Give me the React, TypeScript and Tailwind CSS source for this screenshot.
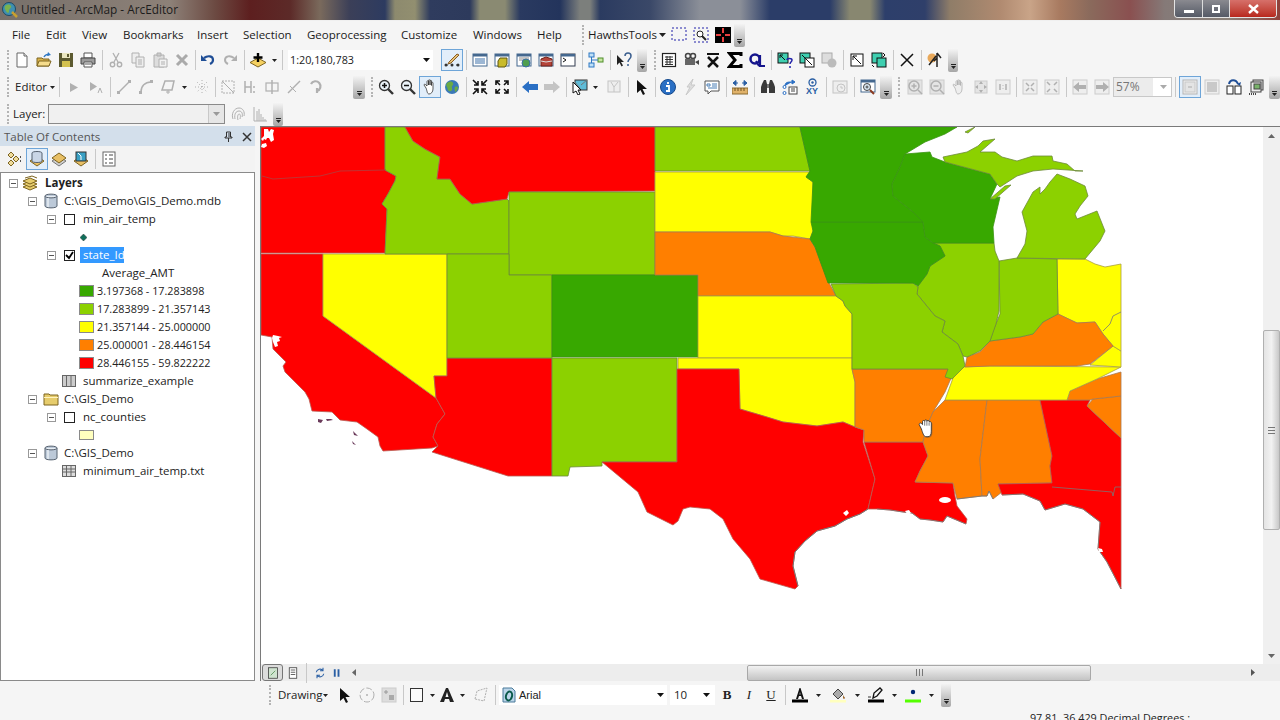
import React from "react";

const F = "[font-family:'Open_Sans','Noto_Sans',sans-serif]";

const S = ({ children, w = 16, h = 16, o = 1 }: { children: React.ReactNode; w?: number; h?: number; o?: number }) => (
  <svg width={w} height={h} viewBox={`0 0 ${w} ${h}`} opacity={o} className="block shrink-0">
    {children}
  </svg>
);
const G = "#b0b0b0";

const Icons: Record<string, React.ReactNode> = {
  new: <><path d="M3 1h7l3 3v11H3z" fill="#fff" stroke="#666" /><path d="M10 1v3h3" fill="#eee" stroke="#666" /></>,
  open: <><path d="M1 14V6h5l1 1h6v7z" fill="#d9b24a" stroke="#7d6420" /><path d="M1 14l2-5h12l-2 5z" fill="#f5dc8c" stroke="#7d6420" /><path d="M8 5c1-2 3-3 5-2" stroke="#2f78c4" strokeWidth="1.5" fill="none" /><path d="M12 0l3 3-4 1z" fill="#2f78c4" /></>,
  save: <><path d="M1 1h14v14H1z" fill="#5c5a30" /><rect x="4" y="1" width="8" height="5" fill="#eae6bf" /><rect x="9" y="2" width="2" height="3" fill="#5c5a30" /><rect x="4" y="9" width="8" height="6" fill="#d3c14f" /></>,
  print: <><path d="M4 1h8v5H4z" fill="#fff" stroke="#555" /><path d="M1 6h14v6H1z" fill="#9a9a9a" stroke="#444" /><path d="M4 10h8v5H4z" fill="#fff" stroke="#555" /><path d="M5 12h6" stroke="#555" /></>,
  cut: <><path d="M5 1l5 9M11 1L6 10" stroke={G} strokeWidth="1.3" fill="none" /><circle cx="4.500" cy="12.500" r="2.200" fill="none" stroke={G} strokeWidth="1.400" /><circle cx="11.500" cy="12.500" r="2.200" fill="none" stroke={G} strokeWidth="1.400" /></>,
  copy: <><path d="M2 1h7v10H2z" fill="#eee" stroke={G} /><path d="M6 5h8v10H6z" fill="#eee" stroke={G} /><path d="M8 8h4M8 10h4M8 12h4" stroke={G} /></>,
  paste: <><path d="M2 3h10v12H2z" fill="#ddd" stroke={G} /><path d="M5 1h4v3H5z" fill="#ccc" stroke={G} /><path d="M7 7h8v8H7z" fill="#f2f2f2" stroke={G} /><path d="M9 10h4M9 12h4" stroke={G} /></>,
  del: <path d="M3 3l10 10M13 3L3 13" stroke="#aaa" strokeWidth="3" />,
  undo: <><path d="M4 6c4-3 9-2 9 2 0 2-1 3-3 4" fill="none" stroke="#1f4e96" strokeWidth="2.200" /><path d="M1 3v6h6z" fill="#1f4e96" /></>,
  redo: <><path d="M12 6C8 3 3 4 3 8c0 2 1 3 3 4" fill="none" stroke={G} strokeWidth="2" /><path d="M15 3v6H9z" fill={G} /></>,
  add: <><path d="M8 6l8 4.500L8 15l-8-4.500z" fill="#f5d060" stroke="#7d6420" /><path d="M8 1v9M3.500 5.500h9" stroke="#000" strokeWidth="2.400" /></>,
  edit: <><path d="M2 13h12" stroke="#444" strokeDasharray="2 3" /><circle cx="2" cy="13" r="1.500" fill="#333" /><circle cx="8" cy="13" r="1.500" fill="#333" /><circle cx="14" cy="13" r="1.500" fill="#333" /><path d="M5 10l8-8 2 1-8 8-3 1z" fill="#e6c47a" stroke="#8a5a20" /></>,
  win: <><rect x="1" y="2" width="14" height="12" fill="#fff" stroke="#45688f" /><rect x="1" y="2" width="14" height="2.500" fill="#45688f" /><path d="M3 7h10M3 9h10M3 11h10" stroke="#3a6ea8" /></>,
  cat: <><rect x="1" y="2" width="14" height="12" fill="#fff" stroke="#45688f" /><rect x="1" y="2" width="14" height="2.500" fill="#45688f" /><path d="M6 6h7v6l-2 3H4v-6z" fill="#c9bb2a" stroke="#5e5710" /></>,
  search: <><rect x="1" y="2" width="14" height="12" fill="#fff" stroke="#45688f" /><rect x="1" y="2" width="14" height="2.500" fill="#45688f" /><path d="M3 6h10M3 8h6" stroke="#888" /><circle cx="10" cy="11" r="4" fill="#4f9e4f" stroke="#3b6fa8" /></>,
  tool: <><rect x="1" y="2" width="14" height="12" fill="#fff" stroke="#45688f" /><rect x="1" y="2" width="14" height="2.500" fill="#45688f" /><path d="M3 7l5-2 6 2v7H3z" fill="#b5443a" stroke="#6e2018" /><path d="M3 9l5 1 6-1" stroke="#ddd" fill="none" /></>,
  py: <><rect x="1" y="2" width="14" height="12" fill="#fff" stroke="#333c50" /><rect x="1" y="2" width="14" height="2.500" fill="#45688f" /><path d="M3 6l3 2-3 2" stroke="#111" fill="none" /></>,
  model: <><rect x="1" y="1" width="5" height="4" fill="#bfe0f7" stroke="#2f78c4" /><rect x="1" y="11" width="5" height="4" fill="#bfe0f7" stroke="#2f78c4" /><rect x="10" y="6" width="5" height="4" fill="#c6e6a0" stroke="#4f8e2a" /><path d="M3.500 5v6M3.500 8H10" stroke="#2f78c4" /></>,
  help: <><path d="M1 3v10l2.500-2.500 2 4 1.500-1-2-3.500H8z" fill="#222" /><path d="M9 4c0-4 6-4 6 0 0 3-3 3-3 6M12 12v2" fill="none" stroke="#3b5f8f" strokeWidth="1.500" /></>,
  table: <><rect x="1.500" y="1.500" width="13" height="13" fill="#fff" stroke="#222" strokeWidth="1.200" /><path d="M4 5h8M4 7.500h8M4 10h8M4 12.500h8M6 4v9M9 4v9" stroke="#333" /></>,
  film: <><circle cx="5" cy="4" r="2.500" fill="none" stroke="#444" strokeWidth="1.500" /><circle cx="10" cy="4" r="2.500" fill="none" stroke="#444" strokeWidth="1.500" /><rect x="2" y="7" width="10" height="6" fill="#666" /><path d="M12 10l4-2v5z" fill="#444" /></>,
  xbar: <><path d="M2 2h12" stroke="#111" strokeWidth="2" /><path d="M3 5l10 10M13 5L3 15" stroke="#111" strokeWidth="2.500" /></>,
  sigma: <path d="M14 4V1.500H2.500L8 8l-5.500 6.500H14V12" fill="none" stroke="#000" strokeWidth="3" />,
  ql: <><circle cx="6" cy="7" r="4.500" fill="none" stroke="#14148c" strokeWidth="2.500" /><path d="M7 9l3 5" stroke="#14148c" strokeWidth="2" /><path d="M11 3v11h5" fill="none" stroke="#14148c" strokeWidth="2.200" /></>,
  selq: <><rect x="1" y="1" width="10" height="10" fill="#3fcfb0" stroke="#111" /><path d="M3 3l5 5M3 3v3M3 3h3" stroke="#111" /><path d="M10 8c0-2 5-2 5 0 0 2-2 2-2 4M13 14v2" fill="none" stroke="#2222aa" strokeWidth="1.500" /></>,
  selb: <><rect x="1" y="1" width="10" height="10" fill="#3fcfb0" stroke="#111" /><rect x="6" y="6" width="9" height="9" fill="#fff" stroke="#111" /><path d="M3 3l5 5M8 8l5 5" stroke="#111" /></>,
  selg: <><rect x="1" y="1" width="10" height="10" fill="#ddd" stroke="#aaa" /><circle cx="11" cy="11" r="4.500" fill="#bbb" /></>,
  boxarrow: <><rect x="2" y="2" width="12" height="12" fill="#fff" stroke="#111" /><path d="M4 4l8 8M4 4v4M4 4h4" stroke="#111" fill="none" /></>,
  swap: <><rect x="1" y="1" width="10" height="10" fill="#3fcfb0" stroke="#111" /><rect x="6" y="6" width="9" height="9" fill="#3fcfb0" stroke="#111" /><path d="M12 1l2 2-2 2M1 13l2 2" stroke="#111" fill="none" /></>,
  cross: <path d="M2 2l12 12M14 2L2 14" stroke="#111" strokeWidth="1.500" />,
  tool2: <><circle cx="5" cy="6" r="4.500" fill="#e8a85a" /><path d="M2 13l7-9M10 15V1M10 1l4 5M7 9l3-3" stroke="#222" strokeWidth="1.500" fill="none" /></>,
  eArrow: <path d="M4 4l8 4.500-8 4.500z" fill={G} />,
  eArrowA: <><path d="M2 3l7 4.500-7 4.500z" fill={G} /><path d="M10 14l2-5 2 5" stroke={G} fill="none" /></>,
  eLine: <><path d="M3 13L13 3" stroke={G} strokeWidth="1.500" /><rect x="1" y="12" width="3" height="3" fill={G} /><rect x="12" y="1" width="3" height="3" fill={G} /></>,
  eCurve: <><path d="M3 13C3 7 7 3 13 3" stroke={G} strokeWidth="1.500" fill="none" /><rect x="1" y="12" width="3" height="3" fill={G} /><rect x="12" y="1" width="3" height="3" fill={G} /></>,
  ePoly: <><path d="M5 2h9l-2 9H2z" fill="none" stroke={G} strokeWidth="1.500" /><path d="M8 11v4M6 13h4" stroke={G} /></>,
  eDots: <path d="M8 1v14M1 8h14M3 3l10 10M13 3L3 13" stroke={G} strokeDasharray="1 2" />,
  eSq: <><path d="M2 2h12v12H2z" fill="none" stroke={G} strokeDasharray="2 1" /><path d="M2 2l12 12" stroke={G} /></>,
  eH: <path d="M3 2v12M9 2v12M3 8h6M12 7v2M12 12v2" stroke={G} strokeWidth="1.500" />,
  ePlus: <><rect x="2" y="4" width="12" height="8" fill="none" stroke={G} strokeWidth="1.200" /><path d="M8 1v14" stroke={G} strokeWidth="1.500" /></>,
  eSlash: <><path d="M2 14L14 2" stroke={G} strokeWidth="1.500" /><path d="M4 7l6 6" stroke={G} /></>,
  eQ: <path d="M3 5a5 5 0 1 1 6 7M9 9v5" stroke={G} strokeWidth="2.200" fill="none" />,
  zin: <><circle cx="6.500" cy="6.500" r="5" fill="#eaf2f8" stroke="#333" strokeWidth="1.300" /><path d="M4 6.500h5M6.500 4v5" stroke="#111" strokeWidth="1.500" /><path d="M10 10l5 5" stroke="#333" strokeWidth="2.400" /></>,
  zout: <><circle cx="6.500" cy="6.500" r="5" fill="#eaf2f8" stroke="#333" strokeWidth="1.300" /><path d="M4 6.500h5" stroke="#111" strokeWidth="1.500" /><path d="M10 10l5 5" stroke="#333" strokeWidth="2.400" /></>,
  pan: <path d="M4 9L2 6c0-1 1-1 2 0l1 1V2.500c0-1 1.500-1 1.500 0V6V1.500c0-1 1.500-1 1.500 0V6V2c0-1 1.500-1 1.500 0v4.500V4c0-1 1.500-1 1.500 0v6c0 3-2 5-4 5H7C5 15 5 11 4 9z" fill="#fff" stroke="#333" strokeWidth=".8" />,
  globe: <><circle cx="8" cy="8" r="7" fill="#3b79b8" /><path d="M3 4c3-2 5-2 6 0s-2 3-1 5-1 4-3 3-1-3-2-4-1-3 0-4zM11 8c2-1 3 0 3 1l-2 4c-1 0-2-3-1-5z" fill="#6bab45" /></>,
  zfi: <path d="M1 1l5 5M6 2v4H2M15 1l-5 5M10 2v4h4M1 15l5-5M6 14v-4H2M15 15l-5-5M10 14v-4h4" stroke="#111" strokeWidth="1.600" fill="none" />,
  zfo: <path d="M6 6L2 2M2 6V2h4M10 6l4-4M14 6V2h-4M6 10l-4 4M2 10v4h4M10 10l4 4M14 10v4h-4" stroke="#111" strokeWidth="1.600" fill="none" />,
  back: <path d="M0 8l7-6v3h9v6H7v3z" fill="#2a6fc4" />,
  fwd: <path d="M16 8L9 2v3H0v6h9v3z" fill="#c4c4c4" />,
  sel: <><rect x="3" y="1" width="12" height="10" fill="#5fbcd8" stroke="#333" /><path d="M3 3l6 8M15 1L9 6" stroke="#777" /><path d="M1 3v11l3-2 2 4 2-1-2-4h3z" fill="#fff" stroke="#111" /></>,
  selg2: <><rect x="2" y="2" width="12" height="11" fill="#eee" stroke="#c4c4c4" /><path d="M5 3l3 5v5M12 3L8 8" stroke="#c4c4c4" fill="none" /></>,
  arrow: <path d="M3 1v13l3.500-3 2.500 5 2-1-2.500-5H13z" fill="#111" />,
  info: <><circle cx="8" cy="8" r="7.500" fill="#2a6fc4" stroke="#174a8c" /><path d="M8 3v2M6 7h3v5h1M6 12h4" stroke="#fff" strokeWidth="1.800" fill="none" /></>,
  flash: <path d="M11 0L5 8h3l-4 8 9-10H9z" fill="#ddd" stroke="#c9c9c9" />,
  tip: <><path d="M1 2h14v10H7l-3 3v-3H1z" fill="#fff" stroke="#555" /><path d="M3 5h3v2H3zM8 5h5M8 7h5M4 9h9" stroke="#4a7fb5" fill="none" /></>,
  meas: <><path d="M1 4h5M10 4h5M1 4l3-2.500v5zM15 4l-3-2.500v5z" stroke="#2a5fa4" fill="#2a5fa4" /><rect x="0" y="9" width="16" height="6" fill="#e0b26a" stroke="#8a6a30" /><path d="M3 9v3M6 9v3M9 9v3M12 9v3" stroke="#6e5020" /></>,
  bino: <><path d="M2 5l2-4h2l1 4v9H1V8zM14 5l-2-4h-2L9 5v9h6V8z" fill="#3a3a3a" /><rect x="7" y="5" width="2" height="4" fill="#777" /></>,
  route: <><rect x="7" y="8" width="8" height="7" fill="#fff" stroke="#444" /><path d="M9 10h4M9 12h4" stroke="#444" /><circle cx="2.500" cy="8" r="1.500" fill="#fff" stroke="#2a6fc4" /><circle cx="2.500" cy="14" r="1.500" fill="#fff" stroke="#2a6fc4" /><path d="M3 7c0-4 3-4 7-4M10 1l3 2-3 2z" stroke="#2a6fc4" fill="#2a6fc4" /></>,
  time: <><rect x="1" y="2" width="14" height="12" fill="#eee" stroke="#c4c4c4" /><circle cx="9" cy="9" r="4" fill="none" stroke="#c4c4c4" /><path d="M9 7v2h2" stroke="#c4c4c4" fill="none" /></>,
  magWin: <><rect x="1" y="1" width="14" height="12" fill="#fff" stroke="#45688f" /><rect x="1" y="1" width="14" height="2.500" fill="#45688f" /><circle cx="7" cy="8" r="3.500" fill="#dbeaf5" stroke="#444" /><path d="M5.500 8h3M7 6.500v3" stroke="#444" /><path d="M10 11l4 4" stroke="#8a3a20" strokeWidth="2" /></>,
  lzi: <><rect x="1" y="1" width="14" height="14" fill="#e4e4e4" stroke="#ccc" /><circle cx="7" cy="7" r="5" fill="none" stroke={G} strokeWidth="1.500" /><path d="M4.500 7h5M7 4.500v5M11 11l4 4" stroke={G} strokeWidth="1.500" /></>,
  lzo: <><rect x="1" y="1" width="14" height="14" fill="#e4e4e4" stroke="#ccc" /><circle cx="7" cy="7" r="5" fill="none" stroke={G} strokeWidth="1.500" /><path d="M4.500 7h5M11 11l4 4" stroke={G} strokeWidth="1.500" /></>,
  lpan: <path d="M4 9L2 6c0-1 1-1 2 0l1 1V2.500c0-1 1.500-1 1.500 0V6V1.500c0-1 1.500-1 1.500 0V6V2c0-1 1.500-1 1.500 0v4.500V4c0-1 1.500-1 1.500 0v6c0 3-2 5-4 5H7C5 15 5 11 4 9z" fill="#eee" stroke={G} strokeWidth=".8" />,
  lfull: <><rect x="2" y="2" width="12" height="12" fill="#e4e4e4" stroke="#ccc" /><path d="M8 2l2 3H6zM8 14l-2-3h4zM2 8l3-2v4zM14 8l-3 2V6z" fill={G} /></>,
  l11: <><rect x="1" y="1" width="14" height="14" fill="#eee" stroke="#ccc" /><path d="M5 5v6M11 5v6M8 6v.5M8 9v.5" stroke={G} strokeWidth="1.500" /></>,
  lfi: <><rect x="1" y="1" width="14" height="14" fill="#eee" stroke="#ccc" /><path d="M4 4l3 3M12 4L9 7M4 12l3-3M12 12L9 9" stroke={G} strokeWidth="1.500" /></>,
  lfo: <><rect x="1" y="1" width="14" height="14" fill="#eee" stroke="#ccc" /><path d="M3 3l3 3M13 3l-3 3M3 13l3-3M13 13l-3-3" stroke={G} strokeWidth="1.500" /></>,
  lback: <><rect x="1" y="1" width="14" height="14" fill="#eee" stroke="#ccc" /><path d="M1 8l6-5v3h7v4H7v3z" fill={G} /></>,
  lfwd: <><rect x="1" y="1" width="14" height="14" fill="#eee" stroke="#ccc" /><path d="M15 8L9 3v3H2v4h7v3z" fill={G} /></>,
  page: <><rect x="1" y="1" width="14" height="14" fill="#f0f0f0" stroke="#b4b4b4" /><rect x="3" y="3" width="10" height="10" fill="#e4e4e4" stroke="#c8c8c8" /><path d="M6 8h4" stroke="#aaa" /></>,
  pagedots: <><rect x="1" y="1" width="14" height="14" fill="#eee" stroke="#ccc" /><rect x="3" y="3" width="10" height="10" fill="#c9c9c9" /></>,
  chg: <><rect x="1" y="7" width="6" height="8" fill="#fff" stroke="#222" /><rect x="9" y="7" width="6" height="8" fill="#fff" stroke="#222" /><path d="M3 5c1-5 7-5 9 0" stroke="#1f4e96" strokeWidth="2" fill="none" /><path d="M15 3l-1 4-3-2z" fill="#1f4e96" /></>,
  ddp: <><rect x="5" y="1" width="10" height="10" fill="#ddd" stroke="#444" /><rect x="3" y="3" width="10" height="10" fill="#eee" stroke="#444" /><rect x="6" y="5" width="6" height="5" fill="#79b36b" stroke="#444" /><path d="M1 15h8" stroke="#444" strokeWidth="2" strokeDasharray="1 1" /></>,
  zoomBox: <path d="M1 1h14v12H1z" fill="none" stroke="#2222aa" strokeDasharray="2 2" />,
  zoomSel: <><path d="M1 1h14v14H1z" fill="none" stroke="#2222aa" strokeDasharray="2 2" /><circle cx="7" cy="7" r="3" fill="#fff" stroke="#222" /><path d="M9 9l4 4" stroke="#222" strokeWidth="2" /></>,
  red: <><rect width="16" height="16" fill="#000" /><path d="M8 1v5M8 10v5M1 8h5M10 8h5" stroke="#e84040" strokeWidth="2" /></>,
  tocA: <><path d="M4 1l3 3-3 3-3-3zM9 5l3 3-3 3-3-3zM4 9l3 3-3 3-3-3z" fill="#f0dc9a" stroke="#7d6420" /><path d="M13 6h1M13 10h1" stroke="#222" strokeWidth="1.500" /></>,
  tocB: <><path d="M1 10l7 5 7-5-3-2H4z" fill="#e8bf64" stroke="#7d6420" /><path d="M3 2c0-2 10-2 10 0v8c0 2-10 2-10 0z" fill="#c9d6e6" stroke="#55606e" /></>,
  tocC: <><path d="M1 10l7 5 7-5-3-2H4z" fill="#d0d0d0" stroke="#777" /><path d="M1 7l7-5 7 5-7 5z" fill="#e8bf64" stroke="#7d6420" /></>,
  tocD: <><path d="M1 10l7 5 7-5-3-2H4z" fill="#e8bf64" stroke="#7d6420" /><rect x="3" y="1" width="10" height="9" fill="#3aa0c4" stroke="#333" /><path d="M5 2l3 3v4" stroke="#fff" fill="none" /></>,
  tocE: <><rect x="2" y="1" width="12" height="14" fill="#fff" stroke="#666" /><path d="M4 4h2M8 4h4M4 8h2M8 8h4M4 12h2M8 12h4" stroke="#444" /></>,
  layers: <><path d="M1 12l7 3 7-3-7-3z" fill="#e6cc6c" stroke="#7d6420" /><path d="M1 9l7 3 7-3-7-3z" fill="#e6cc6c" stroke="#7d6420" /><path d="M1 6l7 3 7-3-7-3z" fill="#e6cc6c" stroke="#7d6420" /><path d="M3 3l7-2 5 2" stroke="#7d6420" fill="none" /></>,
  db: <><path d="M2 3c0-2.500 12-2.500 12 0v10c0 2.500-12 2.500-12 0z" fill="#bcc9d8" stroke="#55606e" /><path d="M2 3c0 2.500 12 2.500 12 0" fill="#e8eef4" stroke="#55606e" /><path d="M5 5v9" stroke="#e8eef4" strokeWidth="1.500" /></>,
  folder: <><path d="M1 14V3h5l1 1h8v10z" fill="#e6cc6c" stroke="#7d6420" /><path d="M1 6h14v1H1z" fill="#fff3c0" /></>,
  tbl: <><rect x="1.500" y="2.500" width="13" height="11" fill="#ccc" stroke="#666" /><path d="M5.500 3v10M10 3v10" stroke="#666" /></>,
  tbl2: <><rect x="1.500" y="2.500" width="13" height="11" fill="#ddd" stroke="#666" /><path d="M2 6h12M2 9h12M5.500 3v10M10 3v10" stroke="#666" /></>,
  dataview: <><rect x="2" y="1" width="12" height="14" fill="#cfe3cf" stroke="#333" /><path d="M5 11l6-6" stroke="#4a8a4a" /></>,
  layout: <><rect x="3" y="1" width="10" height="14" fill="#fff" stroke="#333" /><path d="M5 4h6M5 7h6M5 10h6" stroke="#333" /></>,
  refresh: <path d="M3 7a5 5 0 0 1 9-2M13 9a5 5 0 0 1-9 2M12 1v4H8M4 15v-4h4" fill="none" stroke="#2a5fa4" strokeWidth="1.400" />,
  pause: <path d="M5 3v10M10 3v10" stroke="#2a5fa4" strokeWidth="2.500" />,
  rot: <><circle cx="8" cy="8" r="7" fill="none" stroke={G} strokeDasharray="6 2" /><circle cx="8" cy="8" r="1" fill={G} /></>,
  gplus: <><rect x="1" y="1" width="14" height="14" fill="#ddd" stroke="#ccc" /><path d="M5 3v4M3 5h4" stroke="#999" /><rect x="8" y="8" width="5" height="5" fill="#aaa" /></>,
  rect: <rect x="1.500" y="1.500" width="12" height="13" fill="#fafafa" stroke="#333" />,
  bigA: <path d="M1 15L7 1h2l6 14h-4l-1-3H6l-1 3zM6.500 10h3L8 5z" fill="#222" fillRule="evenodd" />,
  gpoly: <path d="M2 12l2-8 10-3-3 13z" fill="none" stroke={G} strokeDasharray="2 1" />,
  opent: <><path d="M2 1h9l3 3v11H2z" fill="#bcd6ea" stroke="#4a7a9a" /><ellipse cx="8" cy="9" rx="3" ry="4.500" fill="none" stroke="#0b5a4a" strokeWidth="2" transform="rotate(15 8 9)" /></>,
  fcolor: <><path d="M4 12L7.500 1h1L12 12H10l-1-3H7l-1 3zM7.500 7.500h1L8 5z" fill="#111" fillRule="evenodd" /><rect x="0" y="12.500" width="16" height="3" fill="#000" /></>,
  fill: <><path d="M3 7l5-5 5 5-5 5z" fill="#aaa" stroke="#444" /><path d="M13 8c1 2 2 2 2 3s-2 1-2 0z" fill="#a06a30" /><rect x="0" y="13" width="16" height="2.500" fill="#ffffbe" /></>,
  pen: <><path d="M5 11l1-5 6-5 2 2-5 6z" fill="none" stroke="#111" strokeWidth="1.300" /><path d="M0 10h3" stroke="#333" /><rect x="0" y="12.500" width="16" height="3" fill="#000" /></>,
  mark: <><circle cx="8" cy="5" r="2.200" fill="#002673" /><rect x="0" y="12.500" width="16" height="3" fill="#55ff00" /></>,
};

const Ic = ({ n, o }: { n: string; o?: number }) => <S o={o}>{Icons[n]}</S>;

const B = ({ n, active }: { n: string; active?: boolean }) => (
  <div className={`w-[22px] h-[22px] shrink-0 flex items-center justify-center ${active ? "bg-[#e2eefa] border border-[#6ea5d8]" : ""}`}>
    <Ic n={n} />
  </div>
);
const Sep = ({ w = "w-[6px]" }: { w?: string }) => (
  <div className={`${w} h-[20px] shrink-0 flex justify-center`}>
    <div className="w-px h-full bg-[#c8c8c8]" />
  </div>
);
const Tri = ({ c = "#222" }: { c?: string }) => (
  <svg width="7" height="4" viewBox="0 0 7 4" className="block shrink-0">
    <path d="M0 0h7L3.500 4z" fill={c} />
  </svg>
);
const Dd = ({ w = "w-[10px]" }: { w?: string }) => (
  <div className={`${w} h-[22px] shrink-0 flex items-center justify-center`}>
    <svg width="5" height="3" viewBox="0 0 5 3" className="block"><path d="M0 0h5L2.500 3z" fill="#222" /></svg>
  </div>
);
const Grip = () => (
  <div className="w-[6px] h-[20px] shrink-0 flex justify-center">
    <div className="h-full border-l-2 border-dotted border-[#b4b4b4]" />
  </div>
);
const Chev = ({ cls = "w-[10px]" }: { cls?: string }) => (
  <div className={`${cls} h-[24px] shrink-0 rounded-b-[2px] bg-gradient-to-b from-[#f7f7f7] to-[#a6a6a6] flex flex-col items-center justify-end pb-[3px] gap-[1px]`}>
    <div className="w-[5px] h-px bg-[#222]" />
    <svg width="5" height="3" viewBox="0 0 5 3" className="block"><path d="M0 0h5L2.500 3z" fill="#222" /></svg>
  </div>
);

const Title = () => (
  <div className={`h-[21px] shrink-0 flex items-start justify-between border-b border-[#f0f0f0] bg-[linear-gradient(90deg,#77706a_0,#8d8178_170px,#6c4a42_215px,#5d1f1f_250px,#5c2a28_290px,#7a6a5c_320px,#3b3f58_350px,#2d3b60_385px,#8d8a6e_395px,#928f70_415px,#2f3c5e_430px,#2d3a5c_470px,#8a8a72_480px,#8a8a72_505px,#2a3a60_520px,#23345c_560px,#7c7f7c_580px,#7c7f7c_590px,#2b3b60_600px,#3a4868_650px,#8b8f98_700px,#8b8f98_740px,#2b3d68_770px,#2b3d68_830px,#888770_850px,#888770_870px,#2d3f6b_885px,#2f3f6a_925px,#8f7d68_950px,#b08a70_1000px,#c9a488_1030px,#a87a60_1060px,#8a6a5c_1090px,#8a5050_1130px,#857a78_1165px,#8a8078_1230px,#90403a_1280px)] ${F}`}>
    <div className="flex items-center h-[20px] pl-[2px]">
      <S>
        <circle cx="7" cy="7" r="6.500" fill="#3f8fb0" stroke="#1d4a66" />
        <path d="M3 4c2-2 5-2 6 0s-2 2-2 5-2 2-3 0-2-3-1-5z" fill="#7ab24e" />
        <path d="M10 10l5 5" stroke="#c9a030" strokeWidth="2.500" />
      </S>
      <span className="ml-[3px] text-[11.800px] leading-none text-[#1c1c1c] whitespace-nowrap">Untitled - ArcMap - ArcEditor</span>
    </div>
    <div className="flex mr-[3px] h-[18px] border border-t-0 border-[#e4e4e4] rounded-b-[4px] overflow-hidden">
      <div className="w-[28px] bg-gradient-to-b from-[#8a8a90] to-[#555a66] flex items-center justify-center border-r border-[#ddd]">
        <div className="w-[10px] h-[3px] mt-[5px] bg-white" />
      </div>
      <div className="w-[27px] bg-gradient-to-b from-[#8a8a90] to-[#555a66] flex items-center justify-center border-r border-[#ddd]">
        <div className="w-[8px] h-[8px] border-2 border-white" />
      </div>
      <div className="w-[46px] bg-gradient-to-b from-[#d6706a] to-[#b8261c] flex items-center justify-center">
        <svg width="11" height="10" viewBox="0 0 11 10"><path d="M1 1l9 8M10 1L1 9" stroke="#fff" strokeWidth="2.400" /></svg>
      </div>
    </div>
  </div>
);

const MENU: [string, string][] = [
  ["File", "w-[34px]"], ["Edit", "w-[36px]"], ["View", "w-[41px]"], ["Bookmarks", "w-[74px]"], ["Insert", "w-[46px]"],
  ["Selection", "w-[64px]"], ["Geoprocessing", "w-[94px]"], ["Customize", "w-[72px]"], ["Windows", "w-[64px]"], ["Help", "w-[43px]"],
];

const Menu = () => (
  <div className={`h-[26px] shrink-0 flex items-center pl-[12px] pt-[2px] text-[11.500px] text-[#1a1a1a] ${F}`}>
    {MENU.map(([t, w]) => (
      <span key={t} className={`${w} shrink-0 whitespace-nowrap`}>{t}</span>
    ))}
    <Grip />
    <span className="ml-[2px] w-[71px] shrink-0 whitespace-nowrap">HawthsTools</span>
    <Tri c="#222" />
    <div className="ml-[2px] flex items-center">
      <B n="zoomBox" /><B n="zoomSel" /><B n="red" />
    </div>
    <Chev cls="w-[11px]" />
  </div>
);

const Row2 = () => (
  <div className="h-[26px] shrink-0 flex items-center pl-[5px]">
    <Grip />
    <B n="new" /><B n="open" /><B n="save" /><B n="print" />
    <Sep />
    <B n="cut" /><B n="copy" /><B n="paste" /><B n="del" />
    <Sep w="w-[4px]" />
    <B n="undo" /><B n="redo" />
    <Sep />
    <B n="add" /><Dd />
    <Sep />
    <div className={`ml-[3px] w-[145px] h-[20px] shrink-0 bg-white flex items-center justify-between pl-[2px] pr-[3px] text-[10.800px] text-[#222] ${F}`}>
      <span>1:20,180,783</span><Tri c="#111" />
    </div>
    <div className="ml-[8px]"><B n="edit" active /></div>
    <Sep />
    <B n="win" /><B n="cat" /><B n="search" /><B n="tool" /><B n="py" />
    <Sep />
    <B n="model" />
    <Sep />
    <B n="help" />
    <div className="ml-[2px]"><Chev /></div>
    <div className="ml-[5px]"><Grip /></div>
    <B n="table" /><B n="film" /><B n="xbar" /><B n="sigma" /><B n="ql" />
    <Sep />
    <B n="selq" /><B n="selb" /><B n="selg" />
    <Sep />
    <B n="boxarrow" /><B n="swap" />
    <Sep />
    <B n="cross" />
    <Sep />
    <B n="tool2" />
    <div className="ml-[2px]"><Chev /></div>
  </div>
);

const Row3 = () => (
  <div className="h-[26px] shrink-0 flex items-center pl-[5px] mt-[1px]">
    <Grip />
    <div className={`w-[45px] shrink-0 flex items-center pl-[4px] text-[11.500px] text-[#222] ${F}`}>
      <span>Editor</span>
      <div className="ml-[3px]"><svg width="5" height="3" viewBox="0 0 5 3" className="block"><path d="M0 0h5L2.500 3z" fill="#222" /></svg></div>
    </div>
    <Sep />
    <div className="w-px shrink-0" />
    <B n="eArrow" /><B n="eArrowA" />
    <Sep />
    <B n="eLine" /><B n="eCurve" /><B n="ePoly" /><Dd />
    <div className="ml-[2px]"><B n="eDots" /></div>
    <Sep w="w-[4px]" />
    <B n="eSq" /><B n="eH" /><B n="ePlus" /><B n="eSlash" /><B n="eQ" />
    <div className="ml-[26px]"><Chev cls="w-[12px]" /></div>
    <div className="ml-[4px]"><Grip /></div>
    <B n="zin" /><B n="zout" /><B n="pan" active /><B n="globe" />
    <Sep />
    <B n="zfi" /><B n="zfo" />
    <Sep />
    <B n="back" /><B n="fwd" />
    <Sep />
    <B n="sel" /><Dd w="w-[8px]" />
    <div className="ml-[4px]"><B n="selg2" /></div>
    <Sep />
    <B n="arrow" />
    <Sep w="w-[4px]" />
    <B n="info" /><B n="flash" /><B n="tip" />
    <Sep />
    <B n="meas" />
    <Sep />
    <B n="bino" /><B n="route" />
    <div className="w-[22px] h-[22px] shrink-0 flex flex-col items-center justify-center text-[#2a5fa4]">
      <svg width="9" height="9" viewBox="0 0 9 9" className="block"><circle cx="4.500" cy="4.500" r="3.500" fill="none" stroke="#2a5fa4" strokeWidth="1.300" /><circle cx="4.500" cy="4.500" r="1.200" fill="#2a5fa4" /></svg>
      <span className="text-[9px] leading-[9px] font-bold [font-family:'Liberation_Sans',sans-serif]">XY</span>
    </div>
    <Sep />
    <B n="time" />
    <Sep />
    <B n="magWin" />
    <div className="ml-[1px]"><Chev cls="w-[12px]" /></div>
    <div className="ml-[4px]"><Grip /></div>
    <div className="ml-[2px] flex">
      <B n="lzi" /><B n="lzo" /><B n="lpan" /><B n="lfull" /><B n="l11" />
    </div>
    <Sep w="w-[5px]" />
    <B n="lfi" /><B n="lfo" />
    <Sep />
    <B n="lback" /><B n="lfwd" />
    <div className={`w-[59px] h-[20px] shrink-0 bg-white border border-[#c8c8c8] flex items-center justify-between pr-[4px] text-[12px] ${F}`}>
      <span className="bg-[#ececec] w-[39px] h-full pl-[2px] leading-[18px] text-[#777]">57%</span>
      <Tri c="#aaa" />
    </div>
    <Sep w="w-[7px]" />
    <B n="page" active /><B n="pagedots" /><B n="chg" /><B n="ddp" />
    <div className="ml-[2px]"><Chev cls="w-[11px]" /></div>
  </div>
);

const Row4 = () => (
  <div className="h-[26px] shrink-0 flex items-center pl-[5px] pt-[2px]">
    <Grip />
    <span className={`ml-[2px] w-[35px] shrink-0 text-[11.500px] text-[#222] ${F}`}>Layer:</span>
    <div className="w-[177px] h-[20px] shrink-0 border border-[#8a8a8a] bg-[#f0f0f0] flex items-center justify-end">
      <div className="w-[16px] h-full bg-[#e6e6e6] border-l border-[#c8c8c8] flex items-center justify-center"><Tri c="#999" /></div>
    </div>
    <div className="ml-[2px] flex">
      <div className="w-[22px] h-[22px] flex items-center justify-center">
        <S><path d="M3 13C1 8 4 2 9 2c4 0 6 4 5 8M5 13C4 8 6 5 9 5c3 0 4 3 3 6M8 14c-1-3 0-6 1-6s2 1 1 5" fill="none" stroke={G} /></S>
      </div>
      <div className="w-[22px] h-[22px] flex items-center justify-center">
        <S><path d="M2 15V1M2 15h13M5 15V5M7 15V3M9 15V8M11 15v-4M13 15v-2" stroke={G} /></S>
      </div>
    </div>
    <div className="ml-[2px]"><Chev /></div>
  </div>
);

const Exp = () => (
  <div className="w-[9px] h-[9px] shrink-0 border border-[#999] bg-white flex items-center justify-center">
    <div className="w-[5px] h-px bg-[#555]" />
  </div>
);
const Chk = ({ on }: { on?: boolean }) => (
  <div className="w-[11px] h-[11px] shrink-0 border border-[#222] bg-white flex items-center justify-center">
    {on && <svg width="9" height="9" viewBox="0 0 9 9" className="block"><path d="M1 4l3 3 4-6" stroke="#000" strokeWidth="1.800" fill="none" /></svg>}
  </div>
);
const Txt = ({ children, cls = "" }: { children: React.ReactNode; cls?: string }) => (
  <span className={`whitespace-nowrap text-[11.500px] text-[#222] ${cls}`}>{children}</span>
);
const R = ({ cls, children }: { cls: string; children?: React.ReactNode }) => (
  <div className={`h-[18px] flex items-center ${cls}`}>{children}</div>
);
const Top = ({ n, t }: { n: string; t: string }) => (
  <R cls="pl-[27px]"><Exp /><div className="ml-[6px]"><Ic n={n} /></div><Txt cls="ml-[5px]">{t}</Txt></R>
);
const Lyr = ({ t, on, hl }: { t: string; on?: boolean; hl?: boolean }) => (
  <R cls="pl-[46px]"><Exp /><div className="ml-[8px]"><Chk on={on} /></div>
    {hl ? <span className="ml-[5px] w-[44px] pl-[3px] h-[16px] leading-[16px] whitespace-nowrap text-[11.500px] text-white bg-[#3399ff]">{t}</span> : <Txt cls="ml-[8px]">{t}</Txt>}
  </R>
);
const Tb = ({ n, t }: { n: string; t: string }) => (
  <R cls="pl-[60px]"><Ic n={n} /><Txt cls="ml-[6px]">{t}</Txt></R>
);
const LEG: [string, string][] = [
  ["bg-[#38a800]", "3.197368 - 17.283898"],
  ["bg-[#8cd100]", "17.283899 - 21.357143"],
  ["bg-[#ffff00]", "21.357144 - 25.000000"],
  ["bg-[#ff7f00]", "25.000001 - 28.446154"],
  ["bg-[#ff0000]", "28.446155 - 59.822222"],
];

const Toc = () => (
  <div className={`w-[255px] shrink-0 flex flex-col ${F}`}>
    <div className="h-[20px] shrink-0 bg-[#d3dfeb] flex items-center pl-[4px] pr-[3px] pt-[1px] text-[#555]">
      <span className="text-[11.500px] flex-1">Table Of Contents</span>
      <svg width="11" height="11" viewBox="0 0 11 11" className="block"><path d="M3.500 1h4v5h1.500v1H2v-1h1.500zM5.500 7v4M6 2v4" stroke="#333" fill="none" /></svg>
      <svg width="10" height="10" viewBox="0 0 10 10" className="block ml-[8px]"><path d="M1 1l8 8M9 1L1 9" stroke="#333" strokeWidth="1.500" /></svg>
    </div>
    <div className="h-[26px] shrink-0 bg-[#f3f3f3] flex items-center pl-[4px]">
      <B n="tocA" /><B n="tocB" active /><B n="tocC" /><B n="tocD" />
      <Sep />
      <B n="tocE" />
    </div>
    <div className="flex-1 bg-white border border-[#8a8a8a] pt-[1px] overflow-hidden">
      <R cls="pl-[8px]"><Exp /><div className="ml-[4px]"><Ic n="layers" /></div><span className="ml-[7px] text-[11.500px] font-bold text-[#222]">Layers</span></R>
      <Top n="db" t="C:\GIS_Demo\GIS_Demo.mdb" />
      <Lyr t="min_air_temp" />
      <R cls="pl-[79px]">
        <svg width="7" height="7" viewBox="0 0 7 7" className="block"><path d="M3.500 0L7 3.500 3.500 7 0 3.500z" fill="#0f6f5a" stroke="#333" strokeWidth=".5" /></svg>
      </R>
      <Lyr t="state_Id" on hl />
      <R cls="pl-[101px]"><Txt>Average_AMT</Txt></R>
      {LEG.map(([c, t]) => (
        <R key={t} cls="pl-[78px]">
          <div className={`w-[15px] h-[12px] shrink-0 border border-[#8a8a8a] ${c}`} />
          <span className="ml-[3px] whitespace-nowrap text-[10.800px] text-[#222]">{t}</span>
        </R>
      ))}
      <Tb n="tbl" t="summarize_example" />
      <Top n="folder" t="C:\GIS_Demo" />
      <Lyr t="nc_counties" />
      <R cls="pl-[78px]"><div className="w-[15px] h-[10px] border border-[#8a8a8a] bg-[#ffffbe]" /></R>
      <Top n="db" t="C:\GIS_Demo" />
      <Tb n="tbl2" t="minimum_air_temp.txt" />
    </div>
  </div>
);

const Y = "#ffff00", O = "#ff7f00", Rd = "#ff0000", L = "#8cd100", D = "#38a800";
const STROKE: Record<string, string> = {
  [Y]: "#a8a040",
  [O]: "#a87a50",
  [Rd]: "#b85a50",
  [L]: "#6d8a3a",
  [D]: "#3a9412",
};
const STATES: [string, string][] = [
  [Rd, "261,128 385,128 385,171 396,177 395,182 388,195 382,205 387,210 385,254 261,254"],
  [Rd, "261,255 323,255 323,317 436,399 445,415 437,425 433,438 438,447 432,449 383,452 380,447 378,438 367,430 357,423 340,421 332,413 312,412 309,400 305,393 285,373 283,367 286,363 273,350 272,338 261,336"],
  [Y, "323,255 447,255 447,377 434,377 436,399 323,317"],
  [Rd, "447,359 552,359 552,477 508,477 432,453 438,447 433,438 437,425 445,415 436,399 434,377 447,377"],
  [L, "385,128 405,128 413,142 425,150 440,158 437,180 450,180 460,195 472,205 507,200 509,202 509,255 385,255 387,210 382,205 388,195 395,182 396,177 385,171"],
  [Rd, "405,128 655,128 655,192 509,193 507,200 472,205 460,195 450,180 437,180 440,158 425,150 413,142"],
  [L, "509,193 655,193 655,276 509,276"],
  [L, "447,255 509,255 509,276 552,276 552,359 447,359"],
  [D, "552,276 698,276 698,358 552,358"],
  [L, "552,359 677,359 677,463 602,463 602,467 570,468 568,477 552,477"],
  [L, "655,128 800,128 810,172 655,172"],
  [Y, "655,173 810,173 806,178 813,183 813,232 810,240 793,237 783,237 770,233 655,233"],
  [O, "655,233 770,233 783,237 810,240 815,248 828,282 836,297 698,297 698,276 655,276"],
  [Y, "698,297 836,297 843,302 845,307 852,315 852,359 698,359"],
  [Y, "678,359 852,359 852,370 855,383 855,428 843,423 817,427 800,425 783,423 750,413 740,410 739,370 678,370"],
  [Rd, "677,370 739,370 740,410 750,413 767,418 783,423 800,425 817,427 843,423 855,428 864,431 863,443 875,480 868,510 860,515 847,520 835,527 817,532 805,542 795,553 793,567 798,587 795,590 760,580 750,560 733,540 723,520 710,510 700,509 690,508 683,510 678,522 673,526 647,513 638,493 602,463 677,463"],
  [Rd, "864,443 923,443 928,457 920,472 915,483 953,484 955,497 957,507 967,520 966,525 947,517 943,523 930,521 920,520 912,514 903,513 890,511 877,510 868,510 875,480"],
  [O, "852,370 947,370 956,368 945,393 933,413 927,427 923,443 864,443 864,431 855,428 855,383"],
  [O, "945,401 987,401 980,460 982,497 957,500 953,484 915,483 920,472 928,457 923,443 927,427 933,413"],
  [O, "987,401 1040,401 1052,457 1050,467 1052,484 998,485 1002,493 993,500 989,492 987,497 982,497 980,460"],
  [Rd, "1040,401 1090,401 1087,407 1121,439 1121,590 1107,563 1098,550 1100,523 1083,510 1065,505 1045,511 1040,502 1023,495 1002,496 998,485 1052,484 1050,467 1052,457"],
  [O, "1087,407 1093,400 1121,397 1121,439"],
  [O, "1067,401 1070,392 1097,380 1121,373 1121,397 1093,400 1090,401"],
  [Y, "945,401 957,368 990,367 1121,368 1097,380 1070,392 1067,401"],
  [Y, "1090,366 1113,347 1121,352 1121,368"],
  [Y, "1057,260 1085,260 1095,265 1105,268 1121,265 1121,352 1113,347 1103,335 1095,323 1077,324 1058,315"],
  [O, "965,368 967,358 980,353 990,342 1020,338 1033,335 1043,323 1058,315 1077,324 1095,323 1103,335 1113,347 1090,365 1077,367 990,367"],
  [L, "999,262 1017,259 1057,260 1058,315 1043,323 1033,335 1020,338 990,342 993,332 1000,315"],
  [L, "933,244 994,244 995,252 999,262 999,312 996,325 990,342 980,352 967,358 963,357 958,345 942,333 945,322 935,317 917,295 918,287 927,275 930,267 945,257 940,247"],
  [L, "831,285 913,284 918,288 917,295 935,317 945,322 942,333 958,345 963,357 965,367 957,375 952,380 945,378 948,370 852,370 852,315 845,307 843,302 836,297"],
  [D, "811,223 923,223 925,238 933,244 940,247 945,257 930,267 927,275 918,287 913,284 828,284 815,248 810,240 813,232"],
  [D, "800,128 957,128 945,135 925,143 905,155 900,168 892,185 893,197 913,213 923,223 811,223 813,183 806,178 810,172"],
  [D, "905,155 930,153 932,158 945,163 990,175 997,185 990,200 1000,198 993,228 994,244 933,244 925,238 923,223 913,213 893,197 892,185 900,168"],
  [L, "990,200 1005,187 1011,186 995,200"],
  [L, "943,158 967,153 978,147 983,142 995,140 980,153 995,153 1002,158 1017,162 1033,157 1052,157 1053,162 1067,165 1075,172 1083,172 1053,170 1033,172 1017,177 1000,188 997,185 990,175 945,163"],
  [L, "1057,175 1070,180 1085,187 1088,197 1080,207 1075,215 1077,220 1097,212 1105,232 1100,242 1085,260 1017,259 1025,245 1027,232 1022,213 1033,193 1040,188 1040,195 1045,190 1050,183"],
  [L, "965,133 975,128 968,134"],
];

const MapView = () => (
  <div className="flex-1 min-w-0 border-l border-t border-[#7a7a7a] bg-white overflow-hidden">
    <svg viewBox="261 128 1002 536" width="1002" height="536" className="block">
      {STATES.map(([f, p], i) => (
        <polygon key={i} points={p} fill={f} stroke={STROKE[f]} strokeWidth=".8" strokeLinejoin="round" />
      ))}
      <path d="M262 177l11 3 47-3 20-5 46-1" fill="none" stroke="#b04040" strokeWidth=".8" />
      <path d="M1052 488l60 5 1 4 2-9h6" fill="none" stroke="#777" strokeWidth=".8" />
      <path d="M1103 332l7-7 3-8 8-4" fill="none" stroke="#777" strokeWidth=".8" />
      <path d="M868 510l-8 5-13 5-12 7-18 5-12 10-10 11-2 14 5 20" fill="none" stroke="#777" strokeWidth="1" />
      <path d="M877 510l13 1 13 2 9 1 8 6 10 1 13 2 4-6 19 8M957 500l25-3 5 0 2-5 4 8M1002 496l21-1 17 7 5 9 20-6 18 5 17 13-2 27 9 13 14 27" fill="none" stroke="#777" strokeWidth=".8" />
      <ellipse cx="945" cy="501" rx="6" ry="3" fill="#fff" />
      <path d="M843 514l4-3 2 3-3 3zM905 512l4-1 2 3-3 2zM1098 549l4 1 1 3-4 0z" fill="#fff" />
      <path d="M264 130h4l1 3 2-3 3 1-1 4 1 6-3 2-2-4-2 0-1 2-2-1-1 2-2-2 3-3zM262 145l4-1 1 3-3 2-3-1z" fill="#fff" />
      <path d="M273 336l5 1 4 1-3 1 1 3-3 1 1 4-3 1-2-5-1-4z" fill="#fff" />
      <path d="M318 420l5 1-2 3-3-1zM326 420l5 0 2 1-6 1zM353 432l3 3 2 2-4-1zM352 442l3 3 1 1-3-1z" fill="#6a3a5a" />
      <g transform="translate(917 419) scale(1.100)">
        <path d="M5 11L3 7c0-1 1-2 2-1l1 1V4c0-1 2-1 2 0v-.5c0-1 2-1 2 0V4c0-1 2-1 2 0v.5c1-.5 2 0 2 1V13c0 3-1 5-3 5H9C7 18 6 14 5 11z" fill="#555" opacity=".45" />
        <path d="M4 10L2 6c0-1 1-2 2-1l1 1V3c0-1 2-1 2 0v-.5c0-1 2-1 2 0V3c0-1 2-1 2 0v.5c1-.5 2 0 2 1V12c0 3-1 5-3 5H8C6 17 5 13 4 10z" fill="#fff" stroke="#333" strokeWidth=".8" />
        <path d="M7 3v4M9 3v4M11 4v3" stroke="#333" strokeWidth=".6" />
      </g>
    </svg>
  </div>
);

const VScroll = () => (
  <div className="w-[17px] shrink-0 bg-[#f0f0f0] flex flex-col border-t border-[#7a7a7a]">
    <div className="h-[203px] shrink-0 flex justify-center pt-[7px]">
      <svg width="7" height="4" viewBox="0 0 7 4" className="block"><path d="M0 4h7L3.500 0z" fill="#666" /></svg>
    </div>
    <div className="h-[200px] shrink-0 bg-gradient-to-r from-[#e4e4e4] via-[#f2f2f2] to-[#c8c8c8] border border-[#b0b0b0] rounded-[2px] flex items-center justify-center">
      <div className="w-[7px] h-[7px] border-t border-b border-[#777] flex items-center"><div className="w-full h-px bg-[#777]" /></div>
    </div>
    <div className="flex-1 flex items-end justify-center pb-[6px]"><Tri c="#666" /></div>
  </div>
);

const HBar = () => (
  <div className="h-[17px] shrink-0 flex items-center bg-[#ededed] border-l border-[#7a7a7a] pl-[1px]">
    <div className="w-[21px] h-[17px] shrink-0 bg-[#dcdcdc] border border-[#777] rounded-[3px] flex items-center justify-center">
      <S w={16} h={16}><g transform="translate(2 2) scale(.75)">{Icons.dataview}</g></S>
    </div>
    <div className="w-[20px] shrink-0 flex justify-center"><S><g transform="translate(2 2) scale(.75)">{Icons.layout}</g></S></div>
    <Sep w="w-[6px]" />
    <div className="w-[18px] shrink-0 ml-[2px] flex justify-center"><S><g transform="translate(2 2) scale(.75)">{Icons.refresh}</g></S></div>
    <div className="w-[16px] shrink-0 flex justify-center"><S><g transform="translate(2 2) scale(.75)">{Icons.pause}</g></S></div>
    <div className="w-[18px] shrink-0 flex justify-center">
      <svg width="4" height="7" viewBox="0 0 4 7" className="block"><path d="M4 0v7L0 3.500z" fill="#666" /></svg>
    </div>
    <div className="flex-1" />
    <div className="w-[344px] h-[16px] shrink-0 bg-gradient-to-b from-[#f2f2f2] to-[#c4c4c4] border border-[#a8a8a8] rounded-[2px] flex items-center justify-center">
      <div className="w-[7px] h-[7px] border-l border-r border-[#777] flex justify-center"><div className="h-full w-px bg-[#777]" /></div>
    </div>
    <div className="w-[189px] shrink-0 flex justify-end pr-[25px]">
      <svg width="4" height="7" viewBox="0 0 4 7" className="block"><path d="M0 0v7l4-3.500z" fill="#555" /></svg>
    </div>
  </div>
);

const DrawRow = () => (
  <div className={`h-[24px] mt-[2px] shrink-0 flex items-center pl-[267px] text-[11.500px] text-[#222] ${F}`}>
    <Grip />
    <span className="ml-[5px] w-[45px] shrink-0">Drawing</span>
    <svg width="5" height="3" viewBox="0 0 5 3" className="block shrink-0"><path d="M0 0h5L2.500 3z" fill="#222" /></svg>
    <div className="ml-[6px]"><B n="arrow" /></div>
    <B n="rot" /><B n="gplus" />
    <Sep />
    <B n="rect" /><Dd w="w-[8px]" />
    <B n="bigA" /><Dd w="w-[8px]" />
    <div className="ml-[4px]"><B n="gpoly" /></div>
    <Sep />
    <div className="ml-[1px] w-[168px] h-[20px] shrink-0 bg-white flex items-center justify-between pl-[2px] pr-[3px]">
      <div className="flex items-center"><Ic n="opent" /><span className="ml-[2px] text-[11px] [font-family:'Liberation_Sans',sans-serif]">Arial</span></div>
      <Tri c="#111" />
    </div>
    <div className="ml-[3px] w-[45px] h-[20px] shrink-0 bg-white flex items-center justify-between pl-[4px] pr-[5px]">
      <span>10</span><Tri c="#111" />
    </div>
    <div className="w-[22px] ml-[1px] text-center font-bold text-[13px] [font-family:'Liberation_Serif',serif]">B</div>
    <div className="w-[22px] text-center italic text-[13px] [font-family:'Liberation_Serif',serif]">I</div>
    <div className="w-[22px] text-center underline text-[13px] [font-family:'Liberation_Serif',serif]">U</div>
    <Sep />
    <div className="ml-[1px]"><B n="fcolor" /></div><Dd w="w-[14px]" />
    <div className="ml-[2px]"><B n="fill" /></div><Dd w="w-[16px]" />
    <B n="pen" /><Dd w="w-[14px]" />
    <div className="ml-[1px]"><B n="mark" /></div><Dd w="w-[14px]" />
    <div className="ml-[3px]"><Chev /></div>
  </div>
);

export default function App() {
  return (
    <div className="w-[1280px] h-[720px] overflow-hidden flex flex-col bg-[#f5f5f5]">
      <Title />
      <Menu />
      <Row2 />
      <Row3 />
      <Row4 />
      <div className="h-[555px] shrink-0 flex">
        <Toc />
        <div className="w-[5px] shrink-0" />
        <div className="flex-1 min-w-0 flex flex-col">
          <div className="h-[538px] shrink-0 flex">
            <MapView />
            <VScroll />
          </div>
          <HBar />
        </div>
      </div>
      <DrawRow />
      <div className={`flex justify-end pr-[90px] pt-[3px] text-[10.800px] text-[#222] whitespace-pre ${F}`}>97.81  36.429 Decimal Degrees :</div>
    </div>
  );
}
